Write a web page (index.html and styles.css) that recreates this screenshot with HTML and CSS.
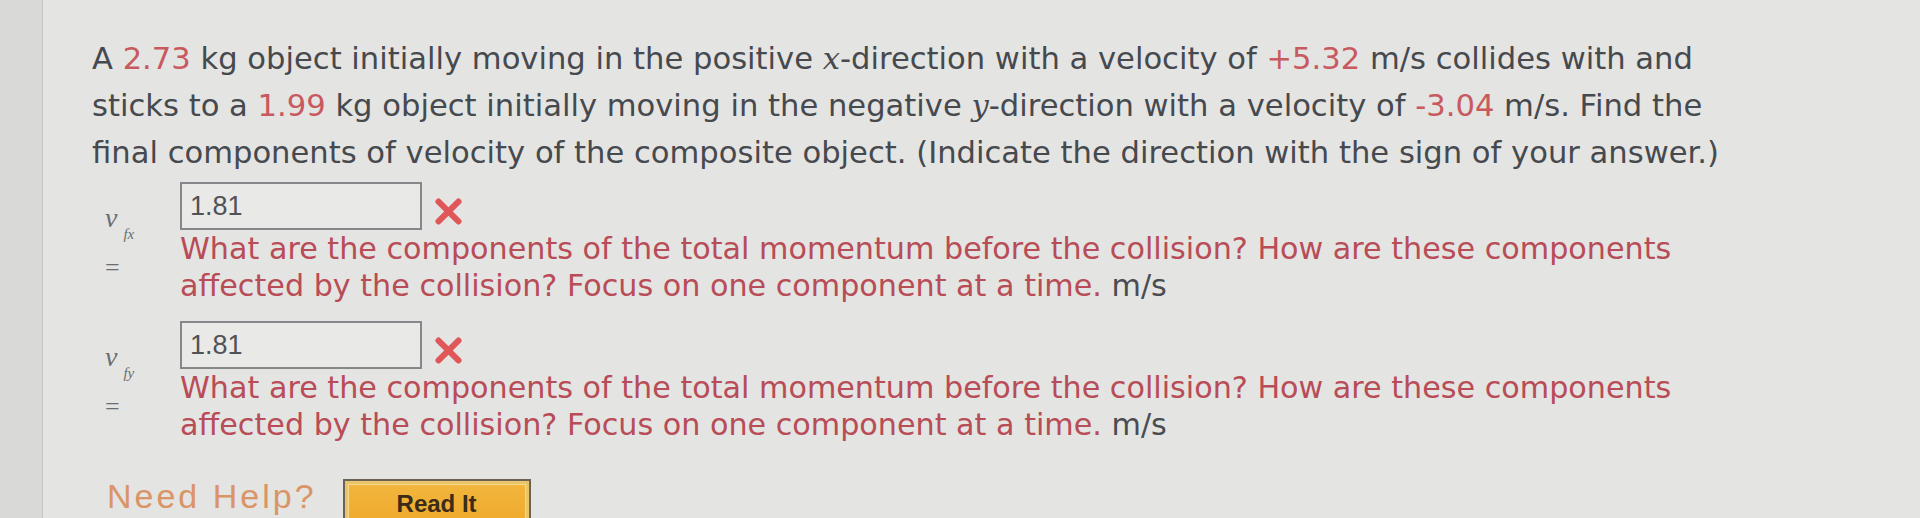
FILE: index.html
```html
<!DOCTYPE html>
<html>
<head>
<meta charset="utf-8">
<link rel="stylesheet" href="styles.css">
</head>
<body>
<div class="strip"></div>
<main class="panel">
  <p class="question">A <span class="num">2.73</span> kg object initially moving in the positive <i class="var">x</i>-direction with a velocity of <span class="num">+5.32</span> m/s collides with and<br>sticks to a <span class="num">1.99</span> kg object initially moving in the negative <i class="var">y</i>-direction with a velocity of <span class="num">-3.04</span> m/s. Find the<br>final components of velocity of the composite object. (Indicate the direction with the sign of your answer.)</p>

  <div class="row row1">
    <div class="label">
      <div class="lv">v<sub>fx</sub></div>
      <div class="leq">=</div>
    </div>
    <div class="body">
      <div class="answer">
        <div class="box">1.81</div>
        <svg class="wrong" viewBox="0 0 28 28" width="31" height="31"><path d="M5 5 L23 23 M23 5 L5 23" stroke="#e0575a" stroke-width="5.5" stroke-linecap="round"/></svg>
      </div>
      <p class="hint">What are the components of the total momentum before the collision? How are these components<br>affected by the collision? Focus on one component at a time. <span class="unit">m/s</span></p>
    </div>
  </div>

  <div class="row row2">
    <div class="label">
      <div class="lv">v<sub>fy</sub></div>
      <div class="leq">=</div>
    </div>
    <div class="body">
      <div class="answer">
        <div class="box">1.81</div>
        <svg class="wrong" viewBox="0 0 28 28" width="31" height="31"><path d="M5 5 L23 23 M23 5 L5 23" stroke="#e0575a" stroke-width="5.5" stroke-linecap="round"/></svg>
      </div>
      <p class="hint">What are the components of the total momentum before the collision? How are these components<br>affected by the collision? Focus on one component at a time. <span class="unit">m/s</span></p>
    </div>
  </div>

  <div class="help">
    <span class="need">Need Help?</span>
    <button class="readit"><span class="inner">Read It</span></button>
  </div>
</main>
</body>
</html>
```

FILE: styles.css
```css
html, body {
  margin: 0;
  padding: 0;
  height: 518px;
  overflow: hidden;
}
body {
  background: #d9d9d7;
  display: flex;
  font-family: "DejaVu Sans", Verdana, sans-serif;
}
.strip {
  width: 42px;
  flex: none;
  border-right: 1px solid #c6c6c4;
}
.panel {
  flex: 1;
  background: #e4e4e2;
  padding: 35px 0 0 49px;
}
.question {
  margin: 0;
  font-size: 30.6px;
  line-height: 47px;
  color: #46494e;
  white-space: nowrap;
}
.num { color: #c8595e; }
.var {
  font-family: "DejaVu Serif", "Liberation Serif", serif;
  font-style: italic;
}
.row {
  display: flex;
  align-items: center;
}
.row1 { margin-top: 6px; }
.row2 { margin-top: 17px; }
.label {
  width: 88px;
  flex: none;
  padding-left: 13px;
  box-sizing: border-box;
  font-family: "Liberation Serif", serif;
  color: #6a6d70;
}
.lv {
  font-size: 28px;
  font-style: italic;
  line-height: 30px;
}
.lv sub {
  font-size: 15px;
  vertical-align: -12px;
  margin-left: 6px;
}
.leq {
  font-size: 26px;
  line-height: 30px;
  margin-top: 4px;
}
.answer {
  display: flex;
  align-items: center;
  gap: 11px;
}
.box {
  width: 230px;
  height: 44px;
  border: 2px solid #85878a;
  background: #e9e9e7;
  font-family: "Liberation Sans", Arial, sans-serif;
  font-size: 27px;
  line-height: 44px;
  color: #505257;
  padding-left: 8px;
  box-sizing: content-box;
}
.wrong { margin-top: 10px; }
.hint {
  margin: 0;
  font-size: 30.2px;
  line-height: 37px;
  color: #b84c57;
  white-space: nowrap;
}
.unit { color: #4a4c52; }
.help {
  display: flex;
  align-items: flex-start;
  gap: 26px;
  margin-top: 36px;
  padding-left: 15px;
}
.need {
  font-family: "Liberation Sans", Arial, sans-serif;
  font-size: 34px;
  letter-spacing: 3px;
  color: #d99468;
  line-height: 38px;
  margin-top: -2px;
}
.readit {
  width: 188px;
  height: 48px;
  padding: 3px;
  border: 2px solid #6a6252;
  background: #e9c46a;
  box-sizing: border-box;
  font: inherit;
  cursor: pointer;
}
.readit .inner {
  display: block;
  height: 100%;
  border: 1px solid #f7d98c;
  background: linear-gradient(#f2b53d, #eeaa2c);
  font-family: "Liberation Sans", Arial, sans-serif;
  font-weight: bold;
  font-size: 24px;
  line-height: 38px;
  color: #3a2c18;
}
```
